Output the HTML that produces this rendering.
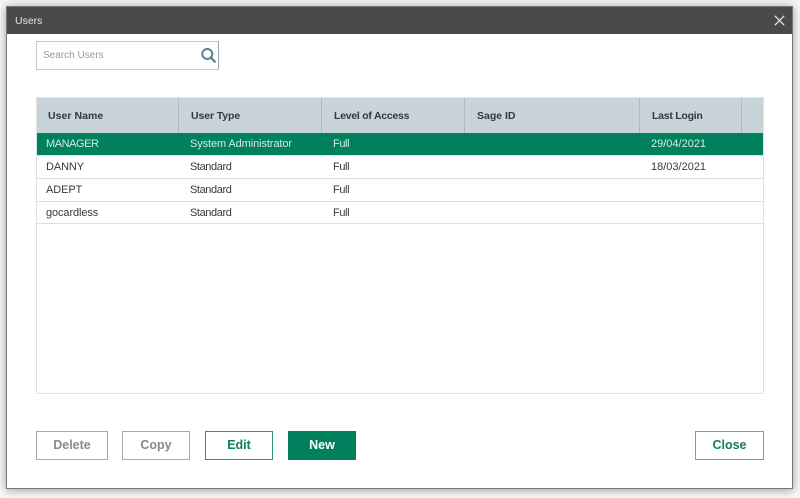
<!DOCTYPE html>
<html>
<head>
<meta charset="utf-8">
<style>
html,body{margin:0;padding:0;width:800px;height:498px;overflow:hidden;background:#f6f6f6}
body{position:relative;font-family:"Liberation Sans",sans-serif;font-size:11px;color:#3c3c3c}
#root{position:absolute;left:0;top:0;width:800px;height:498px;filter:blur(.3px)}
div,span{position:absolute;box-sizing:border-box;white-space:nowrap}
#win{left:6px;top:6px;width:787px;height:483px;background:#fff;border:1px solid #777;box-shadow:0 0 9px rgba(0,0,0,.28),0 3px 8px rgba(0,0,0,.12)}
#title{left:7px;top:7px;width:785px;height:27px;background:#4c4a48}
.t{line-height:14px}
.h{background:#c9d3da;top:98px;height:35px}
.hd{font-weight:bold;color:#33393d;top:108.5px;font-size:10.5px;line-height:14px}
.sep{top:98px;width:1px;height:35px;background:#aebbc4}
.line{left:37px;width:726px;height:1px;background:#d9e0e5}
.c{line-height:14px;color:#3a3a3a;letter-spacing:-.1px}
.n{letter-spacing:-.45px}
.f{letter-spacing:-.4px}
.d{letter-spacing:0}
.w{color:#cfeee2}
.btn{top:431px;height:29px;border:1px solid;background:#fff;text-align:center;font-weight:bold;font-size:12.5px;line-height:27px}
.g{border-color:#a9a9a9;color:#8a8a8a}
.e{border-color:#5fb096;color:#0f7f5f}
</style>
</head>
<body>
<div id="root">
<div id="win"></div>
<div id="title"></div>
<div class="t" style="left:15px;top:14px;color:#e4e4e4;font-size:10.5px">Users</div>
<svg style="position:absolute;left:773.5px;top:14.5px" width="11" height="11" viewBox="0 0 11 11"><path d="M.8 .8L10.2 10.2M10.2 .8L.8 10.2" stroke="#eeeeee" stroke-width="1.1" fill="none"/></svg>

<div style="left:36px;top:41px;width:183px;height:29px;border:1px solid #b9cbd3;border-right-color:#8fa8b3;background:#fff"></div>
<div class="t" style="left:43px;top:49px;color:#9a9a9a;font-size:10px">Search Users</div>
<svg style="position:absolute;left:200px;top:47px" width="17" height="17" viewBox="0 0 17 17"><circle cx="7.3" cy="7" r="5" stroke="#5c7f8c" stroke-width="1.9" fill="none"/><path d="M11 10.8L15.6 15.4" stroke="#5c7f8c" stroke-width="2.2" fill="none"/></svg>

<div style="left:36px;top:97px;width:728px;height:297px;border:1px solid #dde3e8;background:#fff"></div>
<div class="h" style="left:37px;width:726px"></div>
<div class="sep" style="left:178px"></div>
<div class="sep" style="left:321px"></div>
<div class="sep" style="left:464px"></div>
<div class="sep" style="left:639px"></div>
<div class="sep" style="left:741px"></div>
<div class="hd" style="left:48px;letter-spacing:.05px">User Name</div>
<div class="hd" style="left:191px;letter-spacing:-.1px">User Type</div>
<div class="hd" style="left:334px;letter-spacing:-.25px">Level of Access</div>
<div class="hd" style="left:477px">Sage ID</div>
<div class="hd" style="left:652px;letter-spacing:-.25px">Last Login</div>

<div style="left:37px;top:133px;width:726px;height:22px;background:#00805c"></div>
<div class="c w n" style="left:46px;top:137px">MANAGER</div>
<div class="c w" style="left:190px;top:137px">System Administrator</div>
<div class="c w f" style="left:333px;top:137px">Full</div>
<div class="c w d" style="left:651px;top:137px">29/04/2021</div>

<div class="line" style="top:155px"></div>
<div class="c" style="left:46px;top:160px">DANNY</div>
<div class="c f" style="left:190px;top:160px">Standard</div>
<div class="c f" style="left:333px;top:160px">Full</div>
<div class="c d" style="left:651px;top:160px">18/03/2021</div>

<div class="line" style="top:178px"></div>
<div class="c" style="left:46px;top:182.5px">ADEPT</div>
<div class="c f" style="left:190px;top:182.5px">Standard</div>
<div class="c f" style="left:333px;top:182.5px">Full</div>

<div class="line" style="top:201px"></div>
<div class="c" style="left:46px;top:205.5px">gocardless</div>
<div class="c f" style="left:190px;top:205.5px">Standard</div>
<div class="c f" style="left:333px;top:205.5px">Full</div>
<div class="line" style="top:223px"></div>

<div class="btn g" style="left:36px;width:72px">Delete</div>
<div class="btn g" style="left:122px;width:68px">Copy</div>
<div class="btn e" style="left:205px;width:68px;border-color:#2f8f72">Edit</div>
<div class="btn" style="left:288px;width:68px;background:#00805c;border-color:#00805c;color:#fff">New</div>
<div class="btn e" style="left:695px;width:69px">Close</div>
</div>
</body>
</html>
